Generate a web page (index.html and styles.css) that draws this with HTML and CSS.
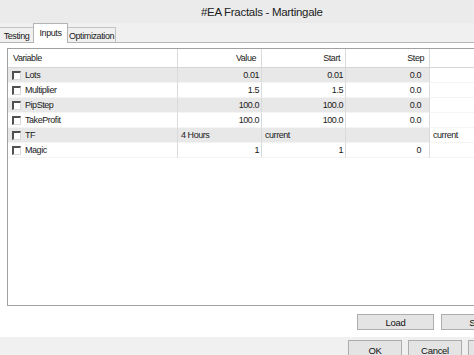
FILE: index.html
```html
<!DOCTYPE html>
<html lang="en">
<head>
    <meta charset="UTF-8">
    <title>#EA Fractals - Martingale</title>
    <link rel="stylesheet" href="styles.css">
</head>
<body>

    <div class="window">
        <div class="titlebar">
            <span class="title">#EA Fractals - Martingale</span>
        </div>

        <!-- Tester tabs -->
        <div class="tabs">
            <div class="tab tab-testing">Testing</div>
            <div class="tab tab-inputs active">Inputs</div>
            <div class="tab tab-optimization">Optimization</div>
        </div>

        <div class="page">
            <div class="grid">
                <div class="row header">
                    <div class="cell">Variable</div>
                    <div class="cell num">Value</div>
                    <div class="cell num">Start</div>
                    <div class="cell num">Step</div>
                    <div class="cell"></div>
                </div>
                <div class="row odd">
                    <div class="cell name"><span class="check"></span>Lots</div>
                    <div class="cell val">0.01</div>
                    <div class="cell val">0.01</div>
                    <div class="cell step">0.0</div>
                    <div class="cell last"></div>
                </div>
                <div class="row">
                    <div class="cell name"><span class="check"></span>Multiplier</div>
                    <div class="cell val">1.5</div>
                    <div class="cell val">1.5</div>
                    <div class="cell step">0.0</div>
                    <div class="cell last"></div>
                </div>
                <div class="row odd">
                    <div class="cell name"><span class="check"></span>PipStep</div>
                    <div class="cell val">100.0</div>
                    <div class="cell val">100.0</div>
                    <div class="cell step">0.0</div>
                    <div class="cell last"></div>
                </div>
                <div class="row">
                    <div class="cell name"><span class="check"></span>TakeProfit</div>
                    <div class="cell val">100.0</div>
                    <div class="cell val">100.0</div>
                    <div class="cell step">0.0</div>
                    <div class="cell last"></div>
                </div>
                <div class="row odd">
                    <div class="cell name"><span class="check"></span>TF</div>
                    <div class="cell text">4 Hours</div>
                    <div class="cell text">current</div>
                    <div class="cell"></div>
                    <div class="cell last text">current</div>
                </div>
                <div class="row">
                    <div class="cell name"><span class="check"></span>Magic</div>
                    <div class="cell val">1</div>
                    <div class="cell val">1</div>
                    <div class="cell step">0</div>
                    <div class="cell last"></div>
                </div>
            </div>

            <div class="actions">
                <button class="btn btn-wide">Load</button>
                <button class="btn btn-wide">Save</button>
            </div>
        </div>

        <div class="footer">
            <button class="btn">OK</button>
            <button class="btn">Cancel</button>
            <button class="btn"></button>
        </div>
    </div>

</body>
</html>
```

FILE: styles.css
```css
body {
    margin: 0;
    padding: 0;
    width: 474px;
    height: 355px;
    overflow: hidden;
    font-family: 'Liberation Sans', Arial, sans-serif;
    color: #1a1a1a;
    background: #f0f0f0;
}

.window {
    width: 560px;
    display: flex;
    flex-direction: column;
}

.titlebar {
    height: 23px;
    background: #ebebeb;
    display: flex;
    align-items: center;
    padding-left: 201px;
}

.title {
    font-size: 11.5px;
    letter-spacing: -0.3px;
    color: #222;
}

/* Tabs */
.tabs {
    height: 19px;
    display: flex;
    align-items: flex-end;
    background: #f0f0f0;
    border-bottom: 1px solid #b4b4b4;
}

.tab {
    height: 15px;
    box-sizing: border-box;
    border: 1px solid #c4c4c4;
    border-bottom: none;
    background: #f0f0f0;
    font-size: 9px;
    letter-spacing: -0.4px;
    display: flex;
    align-items: center;
    justify-content: center;
    margin-right: -1px;
    padding-top: 1px;
}

.tab-testing { width: 34px; border-left: none; }
.tab-inputs { width: 35px; }
.tab-optimization { width: 49px; }

.tab.active {
    height: 20px;
    background: #ffffff;
    border-color: #b4b4b4;
    margin-bottom: -1px;
    position: relative;
    z-index: 1;
    padding-bottom: 3px;
}

/* Tab page */
.page {
    height: 294px;
    background: #ffffff;
    padding: 5px 0 0 7px;
    box-sizing: border-box;
    display: flex;
    flex-direction: column;
}

.grid {
    height: 258px;
    box-sizing: border-box;
    border: 1px solid #a0a0a0;
    border-right: none;
    background: #ffffff;
    font-size: 9px;
    letter-spacing: -0.45px;
}

.row {
    display: grid;
    grid-template-columns: 170px 84px 84px 84px 120px;
    height: 15px;
}

.row.header {
    height: 18px;
    border-bottom: 1px solid #d6d6d6;
}

.row.odd .cell {
    background: #e8e8e8;
}

.row.odd .cell.last {
    background: #ffffff;
}

.cell {
    display: flex;
    align-items: center;
    border-right: 1px solid #dadada;
    border-bottom: 1px solid #f4f4f4;
    white-space: nowrap;
    overflow: hidden;
}

.header .cell {
    border-bottom: none;
    padding: 0 5px;
}

.header .cell.num {
    justify-content: flex-end;
}

.cell.name {
    padding-left: 4px;
}

.cell.val {
    justify-content: flex-end;
    padding-right: 2px;
}

.cell.step {
    justify-content: flex-end;
    padding-right: 8px;
}

.cell.text {
    padding-left: 3px;
}

.check {
    width: 9px;
    height: 9px;
    box-sizing: border-box;
    border-top: 2px solid #505050;
    border-left: 2px solid #505050;
    border-right: 1px solid #d8d8d8;
    border-bottom: 1px solid #d8d8d8;
    background: #ffffff;
    margin-right: 4px;
}

/* Buttons */
.actions {
    display: flex;
    gap: 7px;
    padding-left: 350px;
    margin-top: 8px;
}

.btn {
    height: 16px;
    width: 54px;
    box-sizing: border-box;
    border: 1px solid #adadad;
    background: #e4e4e4;
    font-family: 'Liberation Sans', Arial, sans-serif;
    font-size: 9.5px;
    letter-spacing: -0.3px;
    color: #111;
    padding: 0;
}

.btn-wide {
    width: 77px;
}

.footer {
    height: 40px;
    display: flex;
    gap: 6px;
    padding: 3px 0 0 348px;
    box-sizing: border-box;
    background: #f0f0f0;
}

.footer .btn {
    height: 20px;
}
```
